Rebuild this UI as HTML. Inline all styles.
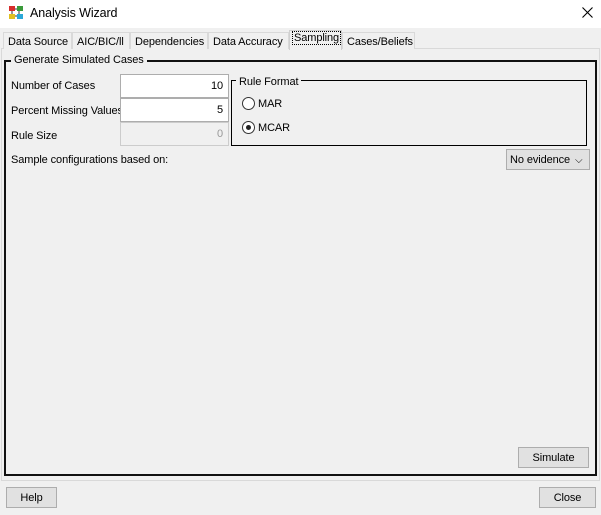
<!DOCTYPE html>
<html><head><style>
*{box-sizing:border-box;margin:0;padding:0}
body{width:601px;height:515px;background:#f0f0f0;font-family:"Liberation Sans",sans-serif;font-size:11px;color:#000;position:relative;overflow:hidden;letter-spacing:-0.1px}
.a{position:absolute}
.tab{position:absolute;top:32px;height:17px;border:1px solid #d9d9d9;border-bottom:none;background:#f0f0f0;padding:3px 0 0 4px;white-space:nowrap}
.fld{position:absolute;background:#fff;border:1px solid #adadad;text-align:right;padding:5px 5px 0 0;height:24px}
.btn{position:absolute;border:1px solid #adadad;background:#e1e1e1;text-align:center;padding-top:4px;height:21px}
.rad{position:absolute;width:13px;height:13px;border:1px solid #333;border-radius:50%;background:#fff}
</style></head><body>
<div class="a" style="left:0;top:0;width:601px;height:28px;background:#fff"></div>
<svg class="a" style="left:8px;top:5px" width="16" height="16" viewBox="0 0 16 16">
<line x1="4" y1="4" x2="11" y2="4" stroke="#333"/><line x1="4" y1="4" x2="4" y2="11" stroke="#333"/><line x1="11" y1="4" x2="11" y2="11" stroke="#333"/><line x1="4" y1="11" x2="11" y2="11" stroke="#333"/>
<rect x="1" y="1" width="6" height="5" fill="#d62c2c"/><rect x="9" y="1" width="6" height="5" fill="#3a9a3a"/><rect x="1" y="9" width="6" height="5" fill="#e0c020"/><rect x="9" y="9" width="6" height="5" fill="#2aa8d8"/></svg>
<div class="a" style="left:30px;top:6px;font-size:12.5px">Analysis Wizard</div>
<svg class="a" style="left:582px;top:7px" width="11" height="11"><path d="M0.5 0.5L10.5 10.5M10.5 0.5L0.5 10.5" stroke="#000" stroke-width="1.1"/></svg>
<div class="a" style="left:1px;top:48px;width:599px;height:433px;border:1px solid #d9d9d9;background:#f0f0f0"></div>
<div class="tab" style="left:3px;width:69px">Data Source</div>
<div class="tab" style="left:72px;width:58px">AIC/BIC/ll</div>
<div class="tab" style="left:130px;width:78px">Dependencies</div>
<div class="tab" style="left:208px;width:81px">Data Accuracy</div>
<div class="tab" style="left:289px;top:30px;height:20px;width:53px;border-color:#d0d0d0;padding:1px 0 0 2px"><span style="border:1px dotted #000;padding:0 1px">Sampling</span></div>
<div class="tab" style="left:342px;width:73px">Cases/Beliefs</div>
<div class="a" style="left:4px;top:60px;width:593px;height:416px;border:2px solid #111"></div>
<div class="a" style="left:11px;top:54px;background:#f0f0f0;padding:0 3px">Generate Simulated Cases</div>
<div class="a" style="left:11px;top:80px">Number of Cases</div>
<div class="a" style="left:11px;top:105px">Percent Missing Values</div>
<div class="a" style="left:11px;top:130px">Rule Size</div>
<div class="fld" style="left:120px;top:74px;width:109px">10</div>
<div class="fld" style="left:120px;top:98px;width:109px">5</div>
<div class="fld" style="left:120px;top:122px;width:109px;background:#f0f0f0;color:#999;border-color:#ccc">0</div>
<div class="a" style="left:231px;top:80px;width:356px;height:66px;border:1px solid #000"></div>
<div class="a" style="left:236px;top:76px;background:#f0f0f0;padding:0 3px">Rule Format</div>
<div class="rad" style="left:242px;top:97px"></div><div class="a" style="left:258px;top:98px">MAR</div>
<div class="rad" style="left:242px;top:121px"><div class="a" style="left:3px;top:3px;width:5px;height:5px;border-radius:50%;background:#222"></div></div><div class="a" style="left:258px;top:122px">MCAR</div>
<div class="a" style="left:11px;top:154px">Sample configurations based on:</div>
<div class="btn" style="left:506px;top:149px;width:84px;text-align:left;padding-left:3px">No evidence <span style="font-size:10px;margin-left:2px">⌵</span></div>
<div class="btn" style="left:518px;top:447px;width:71px">Simulate</div>
<div class="btn" style="left:6px;top:487px;width:51px">Help</div>
<div class="btn" style="left:539px;top:487px;width:57px">Close</div>
</body></html>
